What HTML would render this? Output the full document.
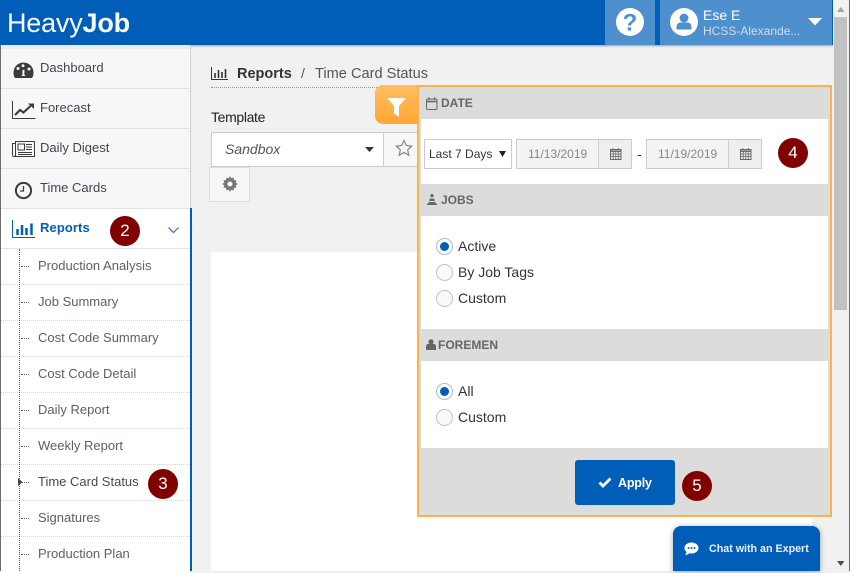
<!DOCTYPE html>
<html><head><meta charset="utf-8"><style>
*{box-sizing:border-box}
html,body{margin:0;padding:0;width:850px;height:571px;overflow:hidden;background:#f1f1f1;font-family:"Liberation Sans",sans-serif;font-size:14px;color:#333}
.a{position:absolute}
.t{position:absolute;white-space:nowrap;line-height:16px}
.nav{position:absolute;left:1px;width:189px;height:40px;background:#f7f7f7;border-bottom:1px solid #e2e2e2}
.sub{position:absolute;left:1px;width:189px;height:36px;background:#fff;border-bottom:1px dotted #d4d4d4}
.sub span{position:absolute;left:37px;top:9px;line-height:16px;font-size:13px;color:#5b6068;white-space:nowrap}
.sub i{position:absolute;left:20px;top:17px;width:8px;border-top:1px dotted #666}
.badge{position:absolute;width:30px;height:30px;border-radius:50%;background:#800000;color:#fff;font-size:17px;line-height:30px;text-align:center}
.hd{position:absolute;left:419px;width:411px;height:32px;background:#dcdcdc;color:#666;font-weight:bold;font-size:12px}
.hd span{position:absolute;top:8px;line-height:16px}
.r{position:absolute;left:436px;width:17px;height:17px;border-radius:50%;border:1px solid #c4c4c4;background:#f9f9f9}
.r.on{border-color:#a9bdd3;background:#fff}
.r.on:after{content:"";position:absolute;left:3px;top:3px;width:9px;height:9px;border-radius:50%;background:#005eb8}
.rl{position:absolute;left:458px;line-height:16px;color:#333}
.n{color:#3f4650;font-size:13px}
</style></head><body>

<!-- header -->
<div class="a" style="left:0;top:0;width:833px;height:45px;background:#005eb8;box-shadow:0 1px 2px rgba(0,0,0,.35)"></div>
<div class="t" style="left:7px;top:7px;font-size:27px;line-height:32px;color:#fff;letter-spacing:-.2px;opacity:.97">Heavy<b>Job</b></div>
<div class="a" style="left:605px;top:0;width:50px;height:45px;background:#4e8fce"></div>
<div class="a" style="left:660px;top:0;width:172px;height:45px;background:#4e8fce"></div>
<svg class="a" style="left:616px;top:8px" width="28" height="28" viewBox="0 0 28 28"><circle cx="14" cy="14" r="14" fill="#fff"/><text x="14" y="22.500" text-anchor="middle" font-family="Liberation Sans" font-weight="bold" font-size="24" fill="#4e8fce">?</text></svg>
<svg class="a" style="left:670px;top:8px" width="28" height="28" viewBox="0 0 28 28"><circle cx="14" cy="14" r="14" fill="#fff"/><circle cx="14" cy="10" r="4.400" fill="#4e8fce"/><path d="M6.500 21.500v-2.500c0-3 2-4.500 4-4.500h7c2 0 4 1.500 4 4.500v2.500z" fill="#4e8fce"/></svg>
<div class="t" style="left:703px;top:7px;color:#fff;font-size:14px">Ese E</div>
<div class="t" style="left:703px;top:23px;color:#d3dde8;font-size:12px">HCSS-Alexande...</div>
<svg class="a" style="left:808px;top:18px" width="14" height="8"><path d="M0 0h14L7 7.500z" fill="#fff"/></svg>

<!-- scrollbar -->
<div class="a" style="left:833px;top:0;width:17px;height:571px;background:#f1f1f1"></div>
<div class="a" style="left:834px;top:17px;width:13px;height:293px;background:#c1c1c1"></div>
<div class="a" style="left:849px;top:0;width:1px;height:571px;background:#6e6e6e"></div>
<svg class="a" style="left:837px;top:7px" width="8" height="5"><path d="M0 5h7.500L3.800 0z" fill="#a0a0a0"/></svg>
<svg class="a" style="left:837px;top:561px" width="8" height="5"><path d="M0 0h7.500L3.800 5z" fill="#505050"/></svg>

<!-- sidebar -->
<div class="a" style="left:0;top:45px;width:1px;height:526px;background:#6e6e6e"></div>
<div class="a" style="left:1px;top:45px;width:189px;height:526px;background:#fff"></div>
<div class="a" style="left:190px;top:45px;width:1px;height:163px;background:#d0d0d0"></div>
<div class="a" style="left:190px;top:208px;width:2px;height:363px;background:#005eb8"></div>
<div class="nav" style="top:49px"></div><div class="nav" style="top:89px"></div><div class="nav" style="top:129px"></div><div class="nav" style="top:169px"></div>
<div class="a" style="left:1px;top:45px;width:189px;height:4px;background:#ececec"></div>
<div class="a" style="left:1px;top:248px;width:189px;height:1px;background:#e2e2e2"></div>

<svg class="a" style="left:13px;top:62px" width="21" height="17" viewBox="0 0 21 17"><path d="M10.500 0.500a10 10 0 0 1 10 10c0 2.200-.4 4-1.500 5.500H2c-1.100-1.500-1.500-3.300-1.500-5.500a10 10 0 0 1 10-10z" fill="#3c3c3c"/><circle cx="5" cy="6.500" r="1.500" fill="#f7f7f7"/><circle cx="10" cy="3.800" r="1.500" fill="#f7f7f7"/><circle cx="16" cy="7" r="1.500" fill="#f7f7f7"/><path d="M9.500 8l2-.3-.2 4.500 1 1.800H8.500l1-1.800z" fill="#f7f7f7"/></svg>
<div class="t n" style="left:40px;top:60px">Dashboard</div>

<svg class="a" style="left:12px;top:101px" width="24" height="18" viewBox="0 0 24 18"><path d="M.5 0v17.500H23.500" fill="none" stroke="#3c3c3c" stroke-width="1"/><path d="M3 14l5-5 3.500 2.500 7-6.500" fill="none" stroke="#3c3c3c" stroke-width="2.200"/><path d="M16 2.500h6v5.500z" fill="#3c3c3c"/></svg>
<div class="t n" style="left:40px;top:100px">Forecast</div>

<svg class="a" style="left:12px;top:141px" width="23" height="16" viewBox="0 0 23 16"><rect x="3.500" y=".5" width="19" height="15" fill="none" stroke="#3c3c3c"/><path d="M3.500 2.500H.5V14a1.500 1.500 0 0 0 3 0" fill="none" stroke="#3c3c3c"/><rect x="6" y="3" width="6.500" height="6" fill="none" stroke="#3c3c3c"/><path d="M14 3.500h6M14 6h6M14 8.500h6M6 11.500h14M6 13.500h14" stroke="#3c3c3c"/></svg>
<div class="t n" style="left:40px;top:140px">Daily Digest</div>

<svg class="a" style="left:14px;top:181px" width="19" height="19" viewBox="0 0 19 19"><circle cx="9.500" cy="9.500" r="7.600" fill="none" stroke="#3c3c3c" stroke-width="2"/><path d="M9.500 5v5H6" fill="none" stroke="#3c3c3c" stroke-width="1.300"/></svg>
<div class="t n" style="left:40px;top:180px">Time Cards</div>

<svg class="a" style="left:12px;top:220px" width="23" height="19" viewBox="0 0 23 19"><path d="M.5 0v17.500H23" fill="none" stroke="#005eb8"/><path d="M5.500 9v6M10 5v10M14.500 8v7M19.500 3.500V15" stroke="#005eb8" stroke-width="2.500"/></svg>
<div class="t" style="left:40px;top:220px;color:#005eb8;font-weight:bold;font-size:13px;letter-spacing:.1px">Reports</div>
<svg class="a" style="left:168px;top:227px" width="11" height="7"><path d="M.5.500L5.500 5.500 10.500.500" fill="none" stroke="#2a70b8" stroke-width="1.200"/></svg>

<div class="sub" style="top:249px"><i></i><span>Production Analysis</span></div>
<div class="sub" style="top:285px"><i></i><span>Job Summary</span></div>
<div class="sub" style="top:321px"><i></i><span>Cost Code Summary</span></div>
<div class="sub" style="top:357px"><i></i><span>Cost Code Detail</span></div>
<div class="sub" style="top:393px"><i></i><span>Daily Report</span></div>
<div class="sub" style="top:429px"><i></i><span>Weekly Report</span></div>
<div class="sub" style="top:465px"><i></i><span style="color:#444a52">Time Card Status</span></div>
<div class="sub" style="top:501px"><i></i><span>Signatures</span></div>
<div class="sub" style="top:537px;border:0"><i></i><span>Production Plan</span></div>
<div class="a" style="left:19px;top:249px;height:322px;border-left:1px dotted #555"></div>
<svg class="a" style="left:18px;top:478px" width="5" height="8"><path d="M0 0l4.500 4L0 8z" fill="#444"/></svg>

<div class="badge" style="left:110px;top:216px">2</div>
<div class="badge" style="left:148px;top:469px">3</div>

<!-- main -->
<svg class="a" style="left:211px;top:67px" width="17" height="13" viewBox="0 0 17 13"><path d="M.5 0v12.500H17" fill="none" stroke="#333"/><path d="M4 6v5M7.500 3v8M11 5v6M14.500 2v9" stroke="#333" stroke-width="1.600"/></svg>
<div class="t" style="left:237px;top:66px;font-weight:bold;font-size:14.500px;color:#333">Reports</div>
<div class="t" style="left:301px;top:65px;color:#555">/</div>
<div class="t" style="left:315px;top:66px;color:#555;font-size:14.600px">Time Card Status</div>
<div class="a" style="left:211px;top:87px;width:170px;border-top:1px dotted #999"></div>
<div class="t" style="left:211px;top:109px;font-size:14px;color:#222;letter-spacing:-.35px">Template</div>
<div class="a" style="left:211px;top:132px;width:173px;height:35px;background:#fff;border:1px solid #ccc"></div>
<div class="t" style="left:225px;top:141px;font-style:italic;color:#555">Sandbox</div>
<svg class="a" style="left:365px;top:147px" width="9" height="5"><path d="M0 0h9L4.500 5z" fill="#333"/></svg>
<div class="a" style="left:384px;top:132px;width:36px;height:35px;background:#f7f7f7;border:1px solid #ccc;border-left:0"></div>
<svg class="a" style="left:395px;top:139px" width="18" height="18" viewBox="0 0 18 18"><path d="M9 1.500l2.300 5 5.400.6-4 3.700 1.100 5.400L9 13.500l-4.800 2.700 1.100-5.400-4-3.700 5.400-.6z" fill="none" stroke="#888" stroke-width="1.200"/></svg>
<div class="a" style="left:209px;top:167px;width:41px;height:35px;background:#f7f7f7;border:1px solid #ddd"></div>
<svg class="a" style="left:222px;top:176px" width="16" height="16" viewBox="0 0 16 16"><path d="M8 0l1.200 2.200 2.300-.7.500 2.500 2.500.5-.7 2.300L16 8l-2.200 1.200.7 2.300-2.500.5-.5 2.500-2.300-.7L8 16l-1.200-2.200-2.300.7-.5-2.500-2.500-.5.7-2.300L0 8l2.200-1.200-.7-2.300 2.500-.5.5-2.500 2.300.7z" fill="#777"/><circle cx="8" cy="8" r="2.500" fill="#f7f7f7"/></svg>
<div class="a" style="left:211px;top:252px;width:601px;height:319px;background:#fff"></div>

<!-- filter tab -->
<div class="a" style="left:375px;top:85px;width:44px;height:39px;border-radius:8px 0 0 8px;background:linear-gradient(#ffbe62,#ffa733)"></div>
<svg class="a" style="left:387px;top:98px" width="19" height="20" viewBox="0 0 19 20"><path d="M0 0h19l-7 8v11l-5-3.500V8z" fill="#fff"/></svg>

<!-- filter panel -->
<div class="a" style="left:417px;top:85px;width:415px;height:432px;background:#dcdcdc;border:2px solid #ffb14c"></div>
<div class="a" style="left:421px;top:119px;width:407px;height:65px;background:#fff"></div>
<div class="a" style="left:421px;top:216px;width:407px;height:113px;background:#fff"></div>
<div class="a" style="left:421px;top:361px;width:407px;height:87px;background:#fff"></div>

<div class="hd" style="top:87px"><span style="left:22px">DATE</span></div>
<svg class="a" style="left:426px;top:97px" width="12" height="13" viewBox="0 0 12 13"><rect x=".5" y="2" width="10.500" height="10.500" rx="1" fill="none" stroke="#666"/><path d="M.5 4.500h10.500" stroke="#666" stroke-width="1.500"/><path d="M3 .5v2.500M8.500 .5v2.500" stroke="#666" stroke-width="1.300"/></svg>
<div class="hd" style="top:184px"><span style="left:22px">JOBS</span></div>
<svg class="a" style="left:427px;top:194px" width="10" height="11" viewBox="0 0 10 11"><path d="M4 0h2l.8 3H3.200zM2.800 4.500h4.400l.6 2.500H2.200zM1.800 8h6.400l.8 1.800h1V11H0V9.800h1z" fill="#666"/></svg>
<div class="hd" style="top:329px"><span style="left:19px">FOREMEN</span></div>
<svg class="a" style="left:426px;top:339px" width="10" height="11" viewBox="0 0 10 11"><circle cx="5" cy="2.800" r="2.600" fill="#666"/><path d="M0 11V7.500C0 6 1 5 2.500 5h5C9 5 10 6 10 7.500V11z" fill="#666"/></svg>

<!-- date row -->
<div class="a" style="left:424px;top:139px;width:88px;height:30px;background:#fff;border:1px solid #ccc"></div>
<div class="t" style="left:429px;top:146px;font-size:12px;color:#333">Last 7 Days</div>
<svg class="a" style="left:499px;top:151px" width="7" height="6"><path d="M0 0h7L3.500 6z" fill="#222"/></svg>
<div class="a" style="left:516px;top:139px;width:83px;height:30px;background:#f3f3f3;border:1px solid #ccc"></div>
<div class="t" style="left:528px;top:146px;font-size:12px;color:#888">11/13/2019</div>
<div class="a" style="left:598px;top:139px;width:34px;height:30px;background:#eee;border:1px solid #ccc"></div>
<div class="t" style="left:637px;top:146px;font-size:14px;color:#333">-</div>
<div class="a" style="left:646px;top:139px;width:83px;height:30px;background:#f3f3f3;border:1px solid #ccc"></div>
<div class="t" style="left:658px;top:146px;font-size:12px;color:#888">11/19/2019</div>
<div class="a" style="left:728px;top:139px;width:34px;height:30px;background:#eee;border:1px solid #ccc"></div>
<svg class="a" style="left:610px;top:148px" width="12" height="12" viewBox="0 0 12 12"><rect x=".5" y="1.500" width="10.500" height="10" fill="none" stroke="#666"/><path d="M.5 3.200h10.500" stroke="#666" stroke-width="1.500"/><path d="M3 0v2M8.500 0v2M.5 6h10.500M.5 8.500h10.500M3.200 4v7M5.800 4v7M8.300 4v7" stroke="#666" stroke-width=".8"/></svg>
<svg class="a" style="left:740px;top:148px" width="12" height="12" viewBox="0 0 12 12"><rect x=".5" y="1.500" width="10.500" height="10" fill="none" stroke="#666"/><path d="M.5 3.200h10.500" stroke="#666" stroke-width="1.500"/><path d="M3 0v2M8.500 0v2M.5 6h10.500M.5 8.500h10.500M3.200 4v7M5.800 4v7M8.300 4v7" stroke="#666" stroke-width=".8"/></svg>
<div class="badge" style="left:778px;top:138px">4</div>

<!-- radios -->
<div class="r on" style="top:238px"></div><div class="rl" style="top:238px">Active</div>
<div class="r" style="top:264px"></div><div class="rl" style="top:264px">By Job Tags</div>
<div class="r" style="top:290px"></div><div class="rl" style="top:290px">Custom</div>
<div class="r on" style="top:383px"></div><div class="rl" style="top:383px">All</div>
<div class="r" style="top:409px"></div><div class="rl" style="top:409px">Custom</div>

<!-- apply -->
<div class="a" style="left:575px;top:460px;width:100px;height:45px;background:#005eb8;border-radius:3px"></div>
<svg class="a" style="left:598px;top:477px" width="14" height="11" viewBox="0 0 14 11"><path d="M1.500 5.500L5 9l7.500-7.500" fill="none" stroke="#fff" stroke-width="2.800"/></svg>
<div class="t" style="left:618px;top:475px;color:#fff;font-weight:bold;font-size:12.500px;letter-spacing:-.2px">Apply</div>
<div class="badge" style="left:682px;top:471px">5</div>

<!-- chat -->
<div class="a" style="left:673px;top:526px;width:147px;height:45px;background:#005eb8;border-radius:8px 8px 0 0;box-shadow:0 1px 6px rgba(0,0,0,.35)"></div>
<svg class="a" style="left:684px;top:542px" width="15" height="14" viewBox="0 0 15 14"><path d="M7.500 0.500c4 0 7 2.500 7 5.500s-3 5.500-7 5.500c-.8 0-1.500-.1-2.200-.3-1 1-2.500 1.800-4.300 1.800.8-.8 1.400-1.800 1.500-3C1.200 9 .5 7.600.5 6c0-3 3-5.500 7-5.500z" fill="#fff"/><circle cx="4.500" cy="6" r="1" fill="#005eb8"/><circle cx="7.500" cy="6" r="1" fill="#005eb8"/><circle cx="10.500" cy="6" r="1" fill="#005eb8"/></svg>
<div class="t" style="left:709px;top:541px;color:#e8f0f8;font-weight:bold;font-size:10.700px">Chat with an Expert</div>
</body></html>
